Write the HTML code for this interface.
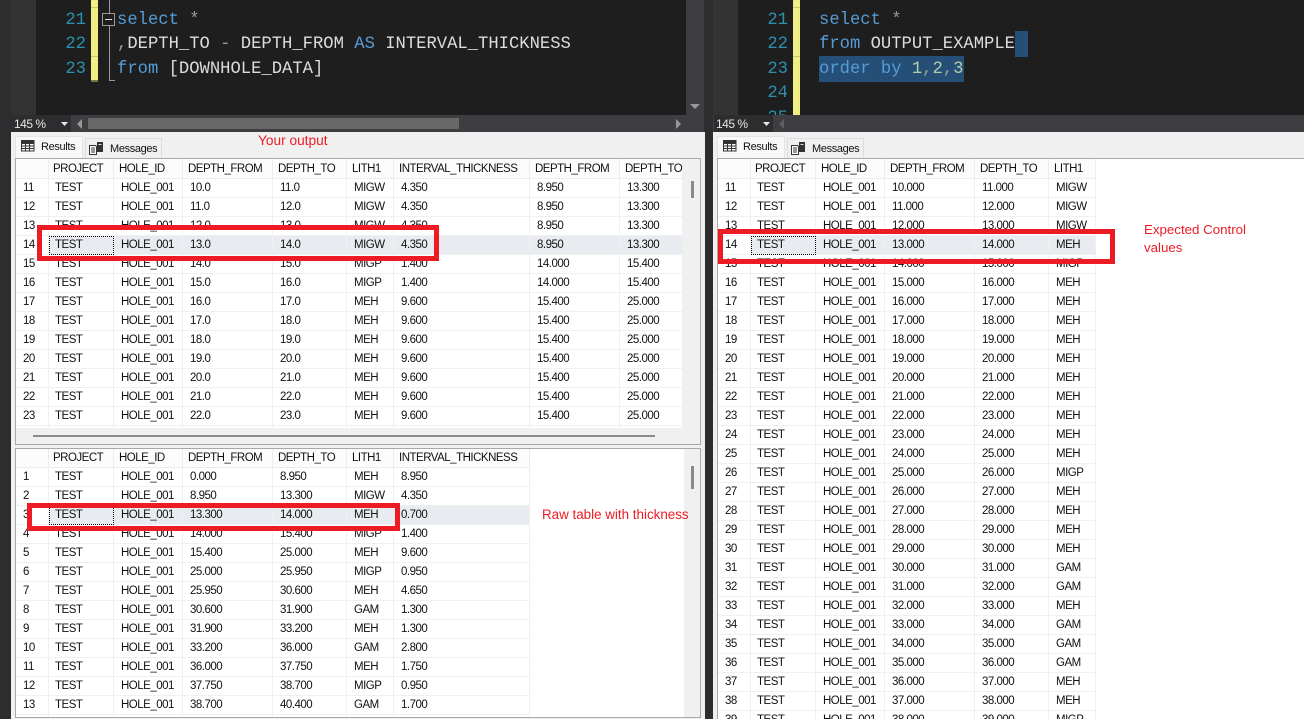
<!DOCTYPE html>
<html><head><meta charset="utf-8"><title>Query comparison</title>
<style>
html,body{margin:0;padding:0;background:#f0f0f0}
body{position:relative;width:1304px;height:719px;overflow:hidden;font-family:"Liberation Sans",sans-serif}
div,span,svg{position:absolute;display:block}
.code{font:17.2px/24.5px "Liberation Mono",monospace;color:#dcdcdc;white-space:pre;left:0;height:25px}
.code span{position:static;display:inline}
.k{color:#569cd6}.o{color:#9a9a9a}.n{color:#b5cea8}
.ln{font:17.2px/24.5px "Liberation Mono",monospace;color:#2b91af;text-align:right;width:30px}
.red{color:#ed1c24;font-size:13.4px;line-height:17px;white-space:nowrap}
.box{border:5px solid #ed1c24;box-sizing:border-box}
.wrap{overflow:hidden;background:#fff}
table{border-collapse:separate;border-spacing:0;table-layout:fixed;font-size:11.5px;letter-spacing:-.5px;color:#111;position:absolute;left:0;top:0}
td,th{height:19px;box-sizing:border-box;padding:0 0 0 7px;border-right:1px solid #f0f0f0;border-bottom:1px solid #f0f0f0;line-height:15px;white-space:nowrap;overflow:hidden;text-align:left;font-weight:normal;background:#fff}
th{padding-left:5px;background:#fcfcfc;border-color:#ececec}
td:nth-child(2){padding-left:6px}
th:nth-child(2){padding-left:4px}
tr.hd1 th{height:20px;padding-top:2px}
td:first-child{padding-left:7px}
tr.h td{background:#e8ecf0}
tr.h td:first-child{background:#fff}
td.f{outline:1px dotted #000;outline-offset:-1px}
.tab{font-size:11px;letter-spacing:-.35px;color:#111;white-space:nowrap;line-height:14px}
.zm{font-size:12px;letter-spacing:-.5px;line-height:16px;color:#e8e8e8;white-space:nowrap}
</style></head><body>

<!-- left editor -->
<div style="left:0;top:0;width:713px;height:115px;background:#2d2d30"></div>
<div style="left:11px;top:0;width:25px;height:115px;background:#333333"></div>
<div style="left:36px;top:0;width:650px;height:115px;background:#1e1e1e"></div>
<div style="left:686px;top:0;width:18px;height:115px;background:#3e3e42"></div>
<svg style="left:689px;top:103px" width="12" height="8"><path d="M1 1H11L6 6Z" fill="#999"/></svg>
<div style="left:91px;top:0;width:7px;height:81px;background:#efef86"></div>
<div style="left:91px;top:7px;width:7px;height:1px;background:#c9c96c"></div>
<div style="left:91px;top:56px;width:7px;height:1px;background:#c9c96c"></div>
<div style="left:91px;top:80px;width:7px;height:2px;background:#77773f"></div>
<div style="left:109px;top:0;width:1px;height:13px;background:#999"></div>
<div style="left:102px;top:13px;width:11px;height:11px;border:1px solid #999"></div>
<div style="left:105px;top:19px;width:7px;height:1px;background:#ddd"></div>
<div style="left:109px;top:26px;width:1px;height:54px;background:#999"></div>
<div style="left:109px;top:80px;width:6px;height:1px;background:#999"></div>
<div class="ln" style="left:56px;top:9px">21</div>
<div class="ln" style="left:56px;top:33px">22</div>
<div class="ln" style="left:56px;top:58px">23</div>
<div class="code" style="left:117px;top:9px"><span class="k">select</span> <span class="o">*</span></div>
<div class="code" style="left:117px;top:33px"><span class="o">,</span>DEPTH_TO <span class="o">-</span> DEPTH_FROM <span class="k">AS</span> INTERVAL_THICKNESS</div>
<div class="code" style="left:117px;top:58px"><span class="k">from</span> [DOWNHOLE_DATA]</div>

<!-- right editor -->
<div style="left:713px;top:0;width:591px;height:115px;background:#1e1e1e"></div>
<div style="left:713px;top:0;width:25px;height:115px;background:#333333"></div>
<div style="left:793px;top:0;width:7px;height:115px;background:#efef86"></div>
<div style="left:793px;top:7px;width:7px;height:1px;background:#c9c96c"></div>
<div style="left:793px;top:56px;width:7px;height:1px;background:#c9c96c"></div>
<div style="left:1015px;top:31px;width:13px;height:26px;background:#264f78"></div>
<div style="left:819px;top:56px;width:145px;height:26px;background:#264f78"></div>
<div class="ln" style="left:758px;top:9px">21</div>
<div class="ln" style="left:758px;top:33px">22</div>
<div class="ln" style="left:758px;top:58px">23</div>
<div class="ln" style="left:758px;top:82px">24</div>
<div style="left:713px;top:105px;width:100px;height:10px;overflow:hidden"><div class="ln" style="left:45px;top:2px">25</div></div>
<div class="code" style="left:819px;top:9px"><span class="k">select</span> <span class="o">*</span></div>
<div class="code" style="left:819px;top:33px"><span class="k">from</span> OUTPUT_EXAMPLE</div>
<div class="code" style="left:819px;top:58px"><span class="k">order by</span> <span class="n">1</span><span class="o">,</span><span class="n">2</span><span class="o">,</span><span class="n">3</span></div>

<!-- zoom bars -->
<div style="left:0;top:115px;width:11px;height:17px;background:#2d2d30"></div>
<div style="left:11px;top:115px;width:693px;height:17px;background:#3e3e42"></div>
<div style="left:11px;top:115px;width:60px;height:17px;background:#2d2d30"></div>
<div class="zm" style="left:14px;top:116px">145 %</div>
<svg style="left:60px;top:121px" width="9" height="6"><path d="M1 1H8L4.500 5Z" fill="#e8e8e8"/></svg>
<svg style="left:76px;top:118px" width="8" height="12"><path d="M6 1V11L1 6Z" fill="#999"/></svg>
<div style="left:88px;top:118px;width:371px;height:11px;background:#686868"></div>
<svg style="left:674px;top:118px" width="8" height="12"><path d="M2 1V11L7 6Z" fill="#999"/></svg>
<div style="left:704px;top:115px;width:9px;height:17px;background:#2d2d30"></div>
<div style="left:713px;top:115px;width:591px;height:17px;background:#3e3e42"></div>
<div style="left:714px;top:115px;width:59px;height:17px;background:#2d2d30"></div>
<div class="zm" style="left:716px;top:116px">145 %</div>
<svg style="left:762px;top:121px" width="9" height="6"><path d="M1 1H8L4.500 5Z" fill="#e8e8e8"/></svg>
<svg style="left:778px;top:118px" width="8" height="12"><path d="M6 1V11L1 6Z" fill="#5f5f63"/></svg>

<!-- results panel dark edges -->
<div style="left:0;top:132px;width:11px;height:587px;background:#2d2d30"></div>
<div style="left:705px;top:132px;width:8px;height:587px;background:#2d2d30"></div>

<!-- left tabs -->
<div style="left:15px;top:136px;width:68px;height:23px;background:#f8f8f8;border:1px solid #e4e4e4;border-bottom:0;box-sizing:border-box"></div>
<div style="left:85px;top:138px;width:77px;height:20px;background:#f0f0f0;border:1px solid #dcdcdc;border-bottom:0;box-sizing:border-box"></div>
<svg style="left:21px;top:140px" width="14" height="12"><path d="M.5.500H13V11H.5ZM.5 3.500H13M.5 6H13M.5 8.500H13M4.500.500V11M8.500.500V11" fill="none" stroke="#333" stroke-width="1"/><rect x="0" y="0" width="13.500" height="3" fill="#333"/></svg>
<svg style="left:89px;top:142px" width="15" height="14"><path d="M.5 3.500H6.500L7.500 4.500V12.500H.5Z" fill="#fff" stroke="#333"/><path d="M2 6H6M2 8H6M2 10H6" stroke="#333"/><rect x="8" y="0" width="6" height="10" fill="#333"/><rect x="9.500" y="2" width="3" height="1" fill="#ddd"/></svg>
<div class="tab" style="left:41px;top:140px">Results</div>
<div class="tab" style="left:110px;top:142px">Messages</div>

<!-- right tabs -->
<div style="left:717px;top:136px;width:68px;height:23px;background:#f8f8f8;border:1px solid #e4e4e4;border-bottom:0;box-sizing:border-box"></div>
<div style="left:787px;top:138px;width:77px;height:20px;background:#f0f0f0;border:1px solid #dcdcdc;border-bottom:0;box-sizing:border-box"></div>
<svg style="left:723px;top:140px" width="14" height="12"><path d="M.5.500H13V11H.5ZM.5 3.500H13M.5 6H13M.5 8.500H13M4.500.500V11M8.500.500V11" fill="none" stroke="#333" stroke-width="1"/><rect x="0" y="0" width="13.500" height="3" fill="#333"/></svg>
<svg style="left:791px;top:142px" width="15" height="14"><path d="M.5 3.500H6.500L7.500 4.500V12.500H.5Z" fill="#fff" stroke="#333"/><path d="M2 6H6M2 8H6M2 10H6" stroke="#333"/><rect x="8" y="0" width="6" height="10" fill="#333"/><rect x="9.500" y="2" width="3" height="1" fill="#ddd"/></svg>
<div class="tab" style="left:743px;top:140px">Results</div>
<div class="tab" style="left:812px;top:142px">Messages</div>

<!-- grid 1 -->
<div style="left:15px;top:158px;width:686px;height:287px;border:1px solid #a9a9a9;box-sizing:border-box;background:#f0f0f0"></div>
<div class="wrap" style="left:16px;top:159px;width:667px;height:269px">
<table style="width:667px"><colgroup><col style="width:33px"><col style="width:65px"><col style="width:69px"><col style="width:90px"><col style="width:74px"><col style="width:47px"><col style="width:136px"><col style="width:90px"><col style="width:63px"></colgroup>
<tr class="hd1"><th></th><th>PROJECT</th><th>HOLE_ID</th><th>DEPTH_FROM</th><th>DEPTH_TO</th><th>LITH1</th><th>INTERVAL_THICKNESS</th><th>DEPTH_FROM</th><th>DEPTH_TO</th></tr>
<tr><td>11</td><td>TEST</td><td>HOLE_001</td><td>10.0</td><td>11.0</td><td>MIGW</td><td>4.350</td><td>8.950</td><td>13.300</td></tr>
<tr><td>12</td><td>TEST</td><td>HOLE_001</td><td>11.0</td><td>12.0</td><td>MIGW</td><td>4.350</td><td>8.950</td><td>13.300</td></tr>
<tr><td>13</td><td>TEST</td><td>HOLE_001</td><td>12.0</td><td>13.0</td><td>MIGW</td><td>4.350</td><td>8.950</td><td>13.300</td></tr>
<tr class="h"><td>14</td><td class="f">TEST</td><td>HOLE_001</td><td>13.0</td><td>14.0</td><td>MIGW</td><td>4.350</td><td>8.950</td><td>13.300</td></tr>
<tr><td>15</td><td>TEST</td><td>HOLE_001</td><td>14.0</td><td>15.0</td><td>MIGP</td><td>1.400</td><td>14.000</td><td>15.400</td></tr>
<tr><td>16</td><td>TEST</td><td>HOLE_001</td><td>15.0</td><td>16.0</td><td>MIGP</td><td>1.400</td><td>14.000</td><td>15.400</td></tr>
<tr><td>17</td><td>TEST</td><td>HOLE_001</td><td>16.0</td><td>17.0</td><td>MEH</td><td>9.600</td><td>15.400</td><td>25.000</td></tr>
<tr><td>18</td><td>TEST</td><td>HOLE_001</td><td>17.0</td><td>18.0</td><td>MEH</td><td>9.600</td><td>15.400</td><td>25.000</td></tr>
<tr><td>19</td><td>TEST</td><td>HOLE_001</td><td>18.0</td><td>19.0</td><td>MEH</td><td>9.600</td><td>15.400</td><td>25.000</td></tr>
<tr><td>20</td><td>TEST</td><td>HOLE_001</td><td>19.0</td><td>20.0</td><td>MEH</td><td>9.600</td><td>15.400</td><td>25.000</td></tr>
<tr><td>21</td><td>TEST</td><td>HOLE_001</td><td>20.0</td><td>21.0</td><td>MEH</td><td>9.600</td><td>15.400</td><td>25.000</td></tr>
<tr><td>22</td><td>TEST</td><td>HOLE_001</td><td>21.0</td><td>22.0</td><td>MEH</td><td>9.600</td><td>15.400</td><td>25.000</td></tr>
<tr><td>23</td><td>TEST</td><td>HOLE_001</td><td>22.0</td><td>23.0</td><td>MEH</td><td>9.600</td><td>15.400</td><td>25.000</td></tr>
<tr><td></td><td></td><td></td><td></td><td></td><td></td><td></td><td></td><td></td></tr>
</table></div>
<div style="left:691px;top:181px;width:3px;height:17px;background:#8a8a8a"></div>
<div style="left:33px;top:435px;width:622px;height:2px;background:#8a8a8a"></div>

<!-- grid 2 -->
<div style="left:15px;top:448px;width:686px;height:270px;border:1px solid #a9a9a9;box-sizing:border-box;background:#f0f0f0"></div>
<div class="wrap" style="left:16px;top:449px;width:668px;height:268px">
<table style="width:514px"><colgroup><col style="width:33px"><col style="width:65px"><col style="width:69px"><col style="width:90px"><col style="width:74px"><col style="width:47px"><col style="width:136px"></colgroup>
<tr><th></th><th>PROJECT</th><th>HOLE_ID</th><th>DEPTH_FROM</th><th>DEPTH_TO</th><th>LITH1</th><th>INTERVAL_THICKNESS</th></tr>
<tr><td>1</td><td>TEST</td><td>HOLE_001</td><td>0.000</td><td>8.950</td><td>MEH</td><td>8.950</td></tr>
<tr><td>2</td><td>TEST</td><td>HOLE_001</td><td>8.950</td><td>13.300</td><td>MIGW</td><td>4.350</td></tr>
<tr class="h"><td>3</td><td class="f">TEST</td><td>HOLE_001</td><td>13.300</td><td>14.000</td><td>MEH</td><td>0.700</td></tr>
<tr><td>4</td><td>TEST</td><td>HOLE_001</td><td>14.000</td><td>15.400</td><td>MIGP</td><td>1.400</td></tr>
<tr><td>5</td><td>TEST</td><td>HOLE_001</td><td>15.400</td><td>25.000</td><td>MEH</td><td>9.600</td></tr>
<tr><td>6</td><td>TEST</td><td>HOLE_001</td><td>25.000</td><td>25.950</td><td>MIGP</td><td>0.950</td></tr>
<tr><td>7</td><td>TEST</td><td>HOLE_001</td><td>25.950</td><td>30.600</td><td>MEH</td><td>4.650</td></tr>
<tr><td>8</td><td>TEST</td><td>HOLE_001</td><td>30.600</td><td>31.900</td><td>GAM</td><td>1.300</td></tr>
<tr><td>9</td><td>TEST</td><td>HOLE_001</td><td>31.900</td><td>33.200</td><td>MEH</td><td>1.300</td></tr>
<tr><td>10</td><td>TEST</td><td>HOLE_001</td><td>33.200</td><td>36.000</td><td>GAM</td><td>2.800</td></tr>
<tr><td>11</td><td>TEST</td><td>HOLE_001</td><td>36.000</td><td>37.750</td><td>MEH</td><td>1.750</td></tr>
<tr><td>12</td><td>TEST</td><td>HOLE_001</td><td>37.750</td><td>38.700</td><td>MIGP</td><td>0.950</td></tr>
<tr><td>13</td><td>TEST</td><td>HOLE_001</td><td>38.700</td><td>40.400</td><td>GAM</td><td>1.700</td></tr>
<tr><td></td><td></td><td></td><td></td><td></td><td></td><td></td></tr>
</table></div>
<div style="left:691px;top:466px;width:3px;height:23px;background:#8a8a8a"></div>

<!-- grid 3 -->
<div style="left:717px;top:158px;width:587px;height:1px;background:#a9a9a9"></div>
<div style="left:717px;top:158px;width:1px;height:561px;background:#a9a9a9"></div>
<div class="wrap" style="left:718px;top:159px;width:586px;height:560px">
<table style="width:378px"><colgroup><col style="width:33px"><col style="width:65px"><col style="width:69px"><col style="width:90px"><col style="width:74px"><col style="width:47px"></colgroup>
<tr class="hd1"><th></th><th>PROJECT</th><th>HOLE_ID</th><th>DEPTH_FROM</th><th>DEPTH_TO</th><th>LITH1</th></tr>
<tr><td>11</td><td>TEST</td><td>HOLE_001</td><td>10.000</td><td>11.000</td><td>MIGW</td></tr>
<tr><td>12</td><td>TEST</td><td>HOLE_001</td><td>11.000</td><td>12.000</td><td>MIGW</td></tr>
<tr><td>13</td><td>TEST</td><td>HOLE_001</td><td>12.000</td><td>13.000</td><td>MIGW</td></tr>
<tr class="h"><td>14</td><td class="f">TEST</td><td>HOLE_001</td><td>13.000</td><td>14.000</td><td>MEH</td></tr>
<tr><td>15</td><td>TEST</td><td>HOLE_001</td><td>14.000</td><td>15.000</td><td>MIGP</td></tr>
<tr><td>16</td><td>TEST</td><td>HOLE_001</td><td>15.000</td><td>16.000</td><td>MEH</td></tr>
<tr><td>17</td><td>TEST</td><td>HOLE_001</td><td>16.000</td><td>17.000</td><td>MEH</td></tr>
<tr><td>18</td><td>TEST</td><td>HOLE_001</td><td>17.000</td><td>18.000</td><td>MEH</td></tr>
<tr><td>19</td><td>TEST</td><td>HOLE_001</td><td>18.000</td><td>19.000</td><td>MEH</td></tr>
<tr><td>20</td><td>TEST</td><td>HOLE_001</td><td>19.000</td><td>20.000</td><td>MEH</td></tr>
<tr><td>21</td><td>TEST</td><td>HOLE_001</td><td>20.000</td><td>21.000</td><td>MEH</td></tr>
<tr><td>22</td><td>TEST</td><td>HOLE_001</td><td>21.000</td><td>22.000</td><td>MEH</td></tr>
<tr><td>23</td><td>TEST</td><td>HOLE_001</td><td>22.000</td><td>23.000</td><td>MEH</td></tr>
<tr><td>24</td><td>TEST</td><td>HOLE_001</td><td>23.000</td><td>24.000</td><td>MEH</td></tr>
<tr><td>25</td><td>TEST</td><td>HOLE_001</td><td>24.000</td><td>25.000</td><td>MEH</td></tr>
<tr><td>26</td><td>TEST</td><td>HOLE_001</td><td>25.000</td><td>26.000</td><td>MIGP</td></tr>
<tr><td>27</td><td>TEST</td><td>HOLE_001</td><td>26.000</td><td>27.000</td><td>MEH</td></tr>
<tr><td>28</td><td>TEST</td><td>HOLE_001</td><td>27.000</td><td>28.000</td><td>MEH</td></tr>
<tr><td>29</td><td>TEST</td><td>HOLE_001</td><td>28.000</td><td>29.000</td><td>MEH</td></tr>
<tr><td>30</td><td>TEST</td><td>HOLE_001</td><td>29.000</td><td>30.000</td><td>MEH</td></tr>
<tr><td>31</td><td>TEST</td><td>HOLE_001</td><td>30.000</td><td>31.000</td><td>GAM</td></tr>
<tr><td>32</td><td>TEST</td><td>HOLE_001</td><td>31.000</td><td>32.000</td><td>GAM</td></tr>
<tr><td>33</td><td>TEST</td><td>HOLE_001</td><td>32.000</td><td>33.000</td><td>MEH</td></tr>
<tr><td>34</td><td>TEST</td><td>HOLE_001</td><td>33.000</td><td>34.000</td><td>GAM</td></tr>
<tr><td>35</td><td>TEST</td><td>HOLE_001</td><td>34.000</td><td>35.000</td><td>GAM</td></tr>
<tr><td>36</td><td>TEST</td><td>HOLE_001</td><td>35.000</td><td>36.000</td><td>GAM</td></tr>
<tr><td>37</td><td>TEST</td><td>HOLE_001</td><td>36.000</td><td>37.000</td><td>MEH</td></tr>
<tr><td>38</td><td>TEST</td><td>HOLE_001</td><td>37.000</td><td>38.000</td><td>MEH</td></tr>
<tr><td>39</td><td>TEST</td><td>HOLE_001</td><td>38.000</td><td>39.000</td><td>MIGP</td></tr>
</table></div>

<!-- annotations -->
<div class="box" style="left:37px;top:225px;width:402px;height:36px"></div>
<div class="box" style="left:718px;top:229px;width:397px;height:35px"></div>
<div class="box" style="left:27px;top:503px;width:373px;height:28px"></div>
<div class="red" style="left:258px;top:132px;font-size:13.7px">Your output</div>
<div class="red" style="left:542px;top:506px">Raw table with thickness</div>
<div class="red" style="left:1144px;top:221px;font-size:13.3px">Expected Control</div>
<div class="red" style="left:1144px;top:239px;font-size:13.3px">values</div>

</body></html>
